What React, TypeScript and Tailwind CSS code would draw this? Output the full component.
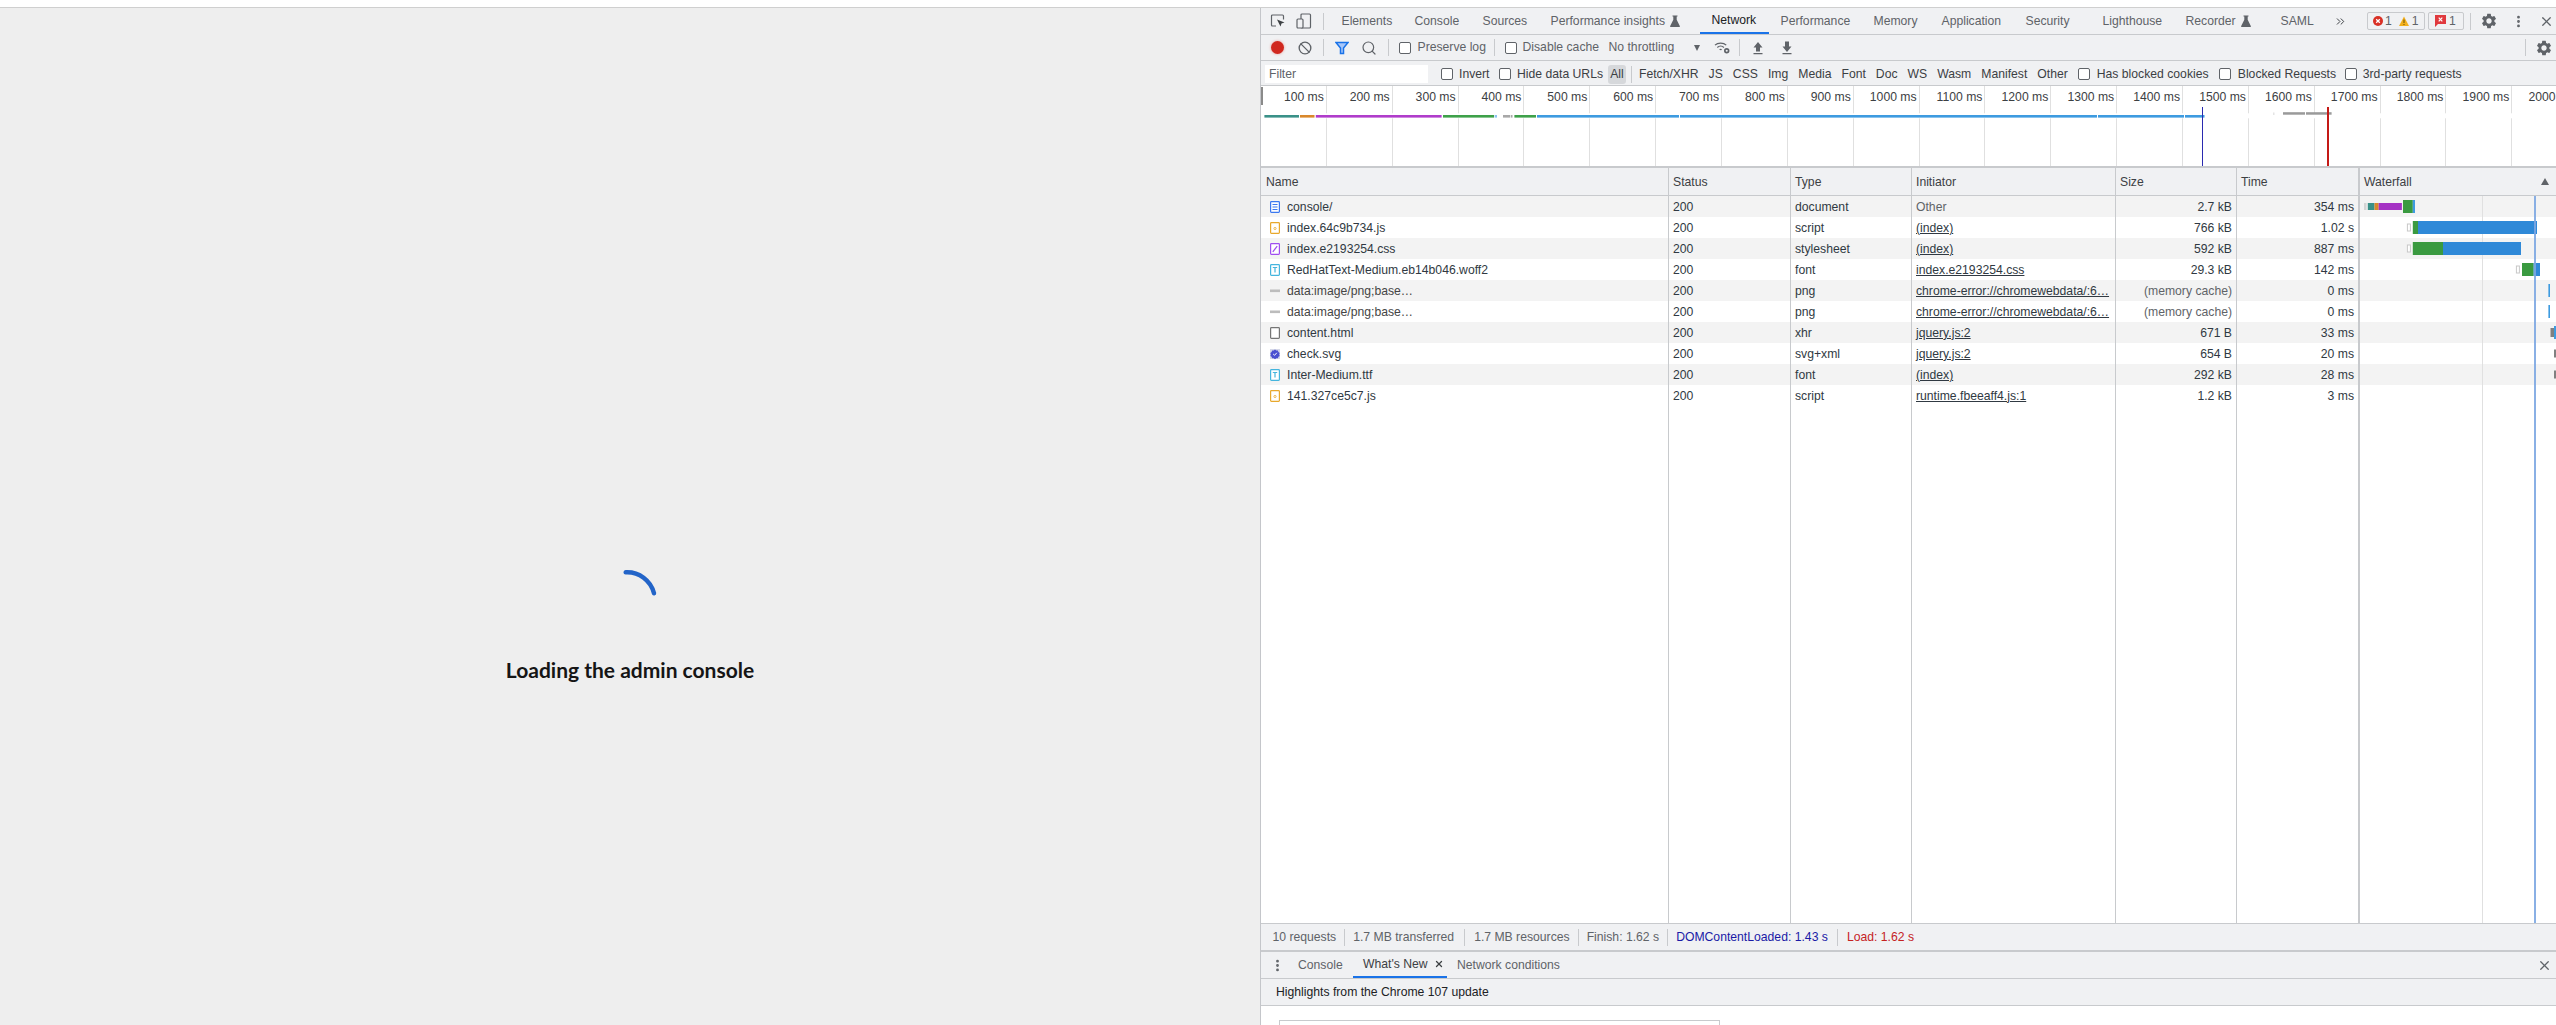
import React from "react";
import { Search, Ban, X, MoreVertical, ChevronsRight } from "lucide-react";
import { MdSettings } from "react-icons/md";

const tabs = [
  { label: "Elements", cls: "w-[73px]" },
  { label: "Console", cls: "w-[68px]" },
  { label: "Sources", cls: "w-[68px]" },
  { label: "Performance insights", cls: "w-[161px]", flask: true },
  { label: "Network", cls: "w-[69px] border-b-2 border-[#1a73e8] text-[#202124]" },
  { label: "Performance", cls: "w-[93px]" },
  { label: "Memory", cls: "w-[68px]" },
  { label: "Application", cls: "w-[84px]" },
  { label: "Security", cls: "w-[77px]" },
  { label: "Lighthouse", cls: "w-[83px]" },
  { label: "Recorder", cls: "w-[95px]", flask: true },
  { label: "SAML", cls: "w-[56px]" },
];

const filterTypes = [
  { label: "Fetch/XHR", cls: "ml-[7px]" },
  { label: "JS", cls: "ml-[10px]" },
  { label: "CSS", cls: "ml-[10px]" },
  { label: "Img", cls: "ml-[10px]" },
  { label: "Media", cls: "ml-[10px]" },
  { label: "Font", cls: "ml-[10px]" },
  { label: "Doc", cls: "ml-[10px]" },
  { label: "WS", cls: "ml-[10px]" },
  { label: "Wasm", cls: "ml-[10px]" },
  { label: "Manifest", cls: "ml-[10px]" },
  { label: "Other", cls: "ml-[10px]" },
];

const ticks = Array.from({ length: 20 }, (_, i) => `${(i + 1) * 100} ms`);

type FileKind = "doc" | "script" | "css" | "font" | "data" | "plain" | "svg";

const rows: { name: string; kind: FileKind; type: string; initiator: string; link: boolean; size: string; time: string }[] = [
  { name: "console/", kind: "doc", type: "document", initiator: "Other", link: false, size: "2.7 kB", time: "354 ms" },
  { name: "index.64c9b734.js", kind: "script", type: "script", initiator: "(index)", link: true, size: "766 kB", time: "1.02 s" },
  { name: "index.e2193254.css", kind: "css", type: "stylesheet", initiator: "(index)", link: true, size: "592 kB", time: "887 ms" },
  { name: "RedHatText-Medium.eb14b046.woff2", kind: "font", type: "font", initiator: "index.e2193254.css", link: true, size: "29.3 kB", time: "142 ms" },
  { name: "data:image/png;base…", kind: "data", type: "png", initiator: "chrome-error://chromewebdata/:6…", link: true, size: "(memory cache)", time: "0 ms" },
  { name: "data:image/png;base…", kind: "data", type: "png", initiator: "chrome-error://chromewebdata/:6…", link: true, size: "(memory cache)", time: "0 ms" },
  { name: "content.html", kind: "plain", type: "xhr", initiator: "jquery.js:2", link: true, size: "671 B", time: "33 ms" },
  { name: "check.svg", kind: "svg", type: "svg+xml", initiator: "jquery.js:2", link: true, size: "654 B", time: "20 ms" },
  { name: "Inter-Medium.ttf", kind: "font", type: "font", initiator: "(index)", link: true, size: "292 kB", time: "28 ms" },
  { name: "141.327ce5c7.js", kind: "script", type: "script", initiator: "runtime.fbeeaff4.js:1", link: true, size: "1.2 kB", time: "3 ms" },
];

// page coordinates, the svg viewBox lines up with them
const overviewBars = [
  [1264.4, 1299, "#3a9188"], [1300, 1314.5, "#d9882b"], [1315.8, 1441.6, "#b03ccb"], [1443, 1494, "#3ea14a"],
  [1494.6, 1497, "#8cc4ee"], [1503, 1510.3, "#a8a8a8"], [1511, 1512.5, "#a8a8a8"], [1514.4, 1536, "#3ea14a"],
  [1537, 1679, "#3d9be0"], [1680, 2097, "#3d9be0"], [2098, 2184, "#3d9be0"], [2185, 2204.5, "#3d9be0"],
] as const;

const waterfallBars: [number, number, number, number, string][] = [
  [2364, 2366.5, 0, 7, "#d4d4d4"], [2367.8, 2374.5, 0, 7, "#3a9188"], [2374.5, 2378.7, 0, 7, "#d9882b"], [2378.7, 2401.9, 0, 7, "#a532c4"],
  [2403, 2412.8, 0, 13, "#3a9a40"], [2412.8, 2415, 0, 13, "#3d9be0"],
  [2412.8, 2418, 1, 13, "#3a9a40"], [2418, 2537, 1, 13, "#2f89d8"],
  [2412.8, 2443, 2, 13, "#3a9a40"], [2443, 2521, 2, 13, "#2f89d8"],
  [2522, 2533.6, 3, 13, "#3a9a40"], [2533.6, 2540, 3, 13, "#2f89d8"],
  [2548.4, 2550, 4, 13, "#3d9be0"], [2548.4, 2550, 5, 13, "#3d9be0"],
  [2550.5, 2554, 6, 9, "#808080"], [2554, 2556, 6, 13, "#3d9be0"],
  [2554, 2556, 7, 8, "#808080"], [2554, 2556, 8, 8, "#808080"],
];

const queued: [number, number][] = [[2407.4, 1], [2407.4, 2], [2516.4, 3]];

function Flask({ className }: { className?: string }) {
  return (
    <svg viewBox="0 0 10 12" className={className} fill="#5f6368">
      <path d="M2.5 0.5h5v1h-.8v3.2L9.8 11a.6.6 0 0 1-.5.9H.7a.6.6 0 0 1-.5-.9L3.3 4.7V1.500h-.8z" />
    </svg>
  );
}

function Checkbox({ className }: { className?: string }) {
  return <input type="checkbox" readOnly className={`appearance-none w-3 h-3 shrink-0 rounded-[2px] border border-[#5f6368] bg-white ${className ?? ""}`} />;
}

function Sep({ className }: { className?: string }) {
  return <div className={`w-px h-[17px] shrink-0 bg-[#c8cacd] ${className ?? ""}`} />;
}

function FileIcon({ kind }: { kind: FileKind }) {
  if (kind === "data") {
    return (
      <svg width="10" height="12" viewBox="0 0 10 12" className="shrink-0">
        <rect x="0" y="4.500" width="10" height="2.600" fill="#bcbcbc" />
      </svg>
    );
  }
  if (kind === "svg") {
    return (
      <svg width="10" height="12" viewBox="0 0 10 12" className="shrink-0">
        <rect x="0" y="1" width="10" height="10" fill="#d5d8e8" />
        <path d="M5 1.500l1.300 1 1.600 0 .5 1.500 1.300 1-.5 1.500.5 1.500-1.300.8-.5 1.500-1.600 0-1.300 1-1.300-1-1.600 0-.5-1.500-1.300-.8.5-1.500-.5-1.500 1.300-1 .5-1.500 1.600 0z" fill="#4a50d0" />
        <path d="M3.200 6l1.300 1.300 2.300-2.500" stroke="#fff" strokeWidth="1" fill="none" />
      </svg>
    );
  }
  const color = { doc: "#3b78f0", script: "#e8a82c", css: "#a04ef0", font: "#45b5de", plain: "#757575" }[kind];
  return (
    <svg width="10" height="12" viewBox="0 0 10 12" className="shrink-0">
      <rect x="0.6" y="0.6" width="8.800" height="10.800" rx="0.800" fill="#fff" stroke={color} strokeWidth="1.200" />
      {kind === "doc" && <path d="M2.500 3.500h5M2.500 6h5M2.500 8.500h5" stroke={color} strokeWidth="1.100" />}
      {kind === "script" && <circle cx="5" cy="6.500" r="1.100" fill="none" stroke={color} strokeWidth="0.800" />}
      {kind === "css" && <path d="M2.800 8.800L7.200 3.200" stroke={color} strokeWidth="1.300" />}
      {kind === "font" && <path d="M2.800 3.500h4.400M5 3.500v5" stroke={color} strokeWidth="1.200" />}
    </svg>
  );
}

function Network() {
  return (
    <svg viewBox="0 0 18 16" className="w-[17px] h-[15px]" fill="none" stroke="#5f6368" strokeWidth="1.300">
      <path d="M1 5.500C4 2.500 10 2.500 13 5.500" />
      <path d="M3.500 8c2-2 5-2 7 0" />
      <path d="M6 10.500c.6-.6 1.400-.6 2 0" />
      <circle cx="13.500" cy="11.500" r="2" strokeWidth="1.800" />
    </svg>
  );
}

function Column({ header, width, children, className }: { header: React.ReactNode; width: string; children: React.ReactNode; className?: string }) {
  return (
    <div className={`flex flex-col shrink-0 h-full ${width} ${className ?? ""}`}>
      <div className="h-[28px] shrink-0 flex items-center bg-[#f0f1f3] border-b border-[#c8cacd] text-[#3c4043] pl-[4px] pt-[1px]">{header}</div>
      {children}
    </div>
  );
}

function Cell({ i, className, children }: { i: number; className?: string; children?: React.ReactNode }) {
  return (
    <div className={`h-[21px] shrink-0 flex items-center whitespace-nowrap overflow-hidden pt-[1px] ${i % 2 === 0 ? "bg-[#f3f3f3]" : "bg-white"} ${className ?? ""}`}>
      {children}
    </div>
  );
}

export default function App() {
  return (
    <div className="flex flex-col w-[2556px] h-screen overflow-hidden bg-white font-['Liberation_Sans',Arial,sans-serif] text-[12.2px] text-[#303942]">
      <div className="h-[8px] shrink-0 bg-white border-b border-[#cfcfcf]" />
      <div className="flex flex-1 min-h-0">
        {/* page being loaded */}
        <div className="w-[1260px] shrink-0 bg-[#eeeeee] flex flex-col items-center pt-[558px]">
          <svg width="66" height="60" viewBox="0 0 66 60" fill="none">
            <path d="M28.700 6.300A27.700 27.700 0 0 1 57 27.300" stroke="#2264c8" strokeWidth="4.500" strokeLinecap="round" />
          </svg>
          <div className="mt-[29px] text-[21px] leading-[30px] font-bold text-[#151515] font-['Lato',sans-serif]">Loading the admin console</div>
        </div>

        {/* devtools */}
        <div className="flex-1 min-w-0 flex flex-col border-l border-[#c4c6ca]">
          <div className="h-[27px] shrink-0 flex items-center bg-[#f0f1f3] border-b border-[#c8cacd] pl-[4px]">
            <div className="w-[26px] flex justify-center">
              <svg viewBox="0 0 16 16" className="w-[16px] h-[16px]" fill="none">
                <path d="M6 13H2.500a1 1 0 0 1-1-1V3a1 1 0 0 1 1-1h10a1 1 0 0 1 1 1v3.500" stroke="#5f6368" strokeWidth="1.200" />
                <path d="M7 6.500l7.500 3-3 1 -1 3z" fill="#3c4043" />
              </svg>
            </div>
            <div className="w-[26px] flex justify-center">
              <svg viewBox="0 0 16 16" className="w-[16px] h-[16px]" fill="none" stroke="#5f6368" strokeWidth="1.200">
                <rect x="5" y="1" width="9.500" height="14" rx="1" />
                <rect x="1" y="6" width="6" height="9" rx="1" fill="#f0f1f3" />
              </svg>
            </div>
            <Sep className="ml-[6px]" />
            <div className="flex items-center h-full ml-[6px] text-[#5f6368]">
              {tabs.map((t) => (
                <div key={t.label} className={`h-full flex items-center gap-[5px] pl-[11.500px] shrink-0 ${t.cls}`}>
                  <span className="whitespace-nowrap">{t.label}</span>
                  {t.flask && <Flask className="w-[10px] h-[12px]" />}
                </div>
              ))}
            </div>
            <ChevronsRight size={13} strokeWidth={1.800} className="shrink-0 text-[#3c4043] ml-[9px]" />
            <div className="ml-[20px] h-[18px] w-[58px] shrink-0 flex items-center rounded-[2px] border border-[#c8cacd] pl-[5px] text-[#5f6368]">
              <svg viewBox="0 0 10 10" className="w-[10px] h-[10px]">
                <circle cx="5" cy="5" r="5" fill="#d93025" />
                <path d="M3.200 3.200l3.600 3.600M6.800 3.200L3.200 6.800" stroke="#fff" strokeWidth="1.300" />
              </svg>
              <span className="ml-[2px]">1</span>
              <svg viewBox="0 0 10 10" className="w-[10px] h-[10px] ml-[7px]">
                <path d="M5 0.500L10 10H0z" fill="#f2b01e" />
                <path d="M5 3.500v3.500M5 8v1" stroke="#6b4e00" strokeWidth="1" />
              </svg>
              <span className="ml-[3px]">1</span>
            </div>
            <div className="ml-[3px] h-[18px] w-[36px] shrink-0 flex items-center rounded-[2px] border border-[#c8cacd] pl-[6px] text-[#5f6368]">
              <svg viewBox="0 0 11 12" className="w-[11px] h-[12px]">
                <path d="M0 0h11v9H3l-3 3z" fill="#e0393e" />
                <path d="M3.700 2.700l3.600 3.600M7.300 2.700L3.700 6.300" stroke="#fff" strokeWidth="1.200" />
              </svg>
              <span className="ml-[3px]">1</span>
            </div>
            <Sep className="ml-[6px]" />
            <MdSettings size={18} className="shrink-0 text-[#5f6368] ml-[9px]" />
            <MoreVertical size={15} strokeWidth={2.500} className="shrink-0 text-[#5f6368] ml-[13px]" />
            <X size={15} strokeWidth={2} className="shrink-0 text-[#5f6368] ml-[13px]" />
          </div>

          <div className="h-[26px] shrink-0 flex items-center bg-[#f0f1f3] border-b border-[#c8cacd] text-[#5f6368]">
            <div className="w-[32px] shrink-0 flex justify-center">
              <div className="w-[13px] h-[13px] rounded-full bg-[#d0281f] shadow-[0_0_3px_#e89a94]" />
            </div>
            <div className="w-[24px] shrink-0 flex justify-center">
              <Ban size={14} strokeWidth={2.300} />
            </div>
            <Sep className="ml-[6px]" />
            <div className="w-[24px] ml-[6px] shrink-0 flex justify-center">
              <svg viewBox="0 0 14 14" className="w-[14px] h-[14px]">
                <path d="M1 1.500h12L8.500 7v5.500h-3V7z" fill="#a8c7fa" stroke="#1a73e8" strokeWidth="1.500" />
              </svg>
            </div>
            <div className="w-[24px] ml-[3px] shrink-0 flex justify-center">
              <Search size={16} strokeWidth={1.800} />
            </div>
            <Sep className="ml-[7px]" />
            <Checkbox className="ml-[10px]" />
            <span className="ml-[6.500px] w-[76px] shrink-0">Preserve log</span>
            <Sep />
            <Checkbox className="ml-[10px]" />
            <span className="ml-[6px] w-[86px] shrink-0">Disable cache</span>
            <span className="w-[85px] shrink-0">No throttling</span>
            <span className="w-0 h-0 shrink-0 border-x-[3.500px] border-x-transparent border-t-[6px] border-t-[#5f6368]" />
            <div className="ml-[14px] shrink-0 flex"><Network /></div>
            <Sep className="ml-[8px]" />
            <svg viewBox="0 0 12 14" className="w-[12px] h-[14px] ml-[12px]" fill="#5f6368"><path d="M6 1L10.500 6.500H8v4H4v-4H1.500zM1.500 12h9v1.300h-9z" /></svg>
            <svg viewBox="0 0 12 14" className="w-[12px] h-[14px] ml-[17px]" fill="#5f6368"><path d="M4 0.500h4v5h2.500L6 11 1.500 5.500H4zM1.500 12h9v1.300h-9z" /></svg>
            <div className="flex-1" />
            <Sep />
            <MdSettings size={18} className="shrink-0 ml-[9px] mr-[3px]" />
          </div>

          <div className="h-[25px] shrink-0 flex items-center bg-[#f0f1f3] border-b border-[#c8cacd] text-[#3c4043] pt-[2px]">
            <div className="ml-[4px] w-[163px] h-[18px] shrink-0 bg-white flex items-center pl-[4px] text-[#5f6368]">Filter</div>
            <Checkbox className="ml-[13px]" />
            <span className="ml-[6px] w-[40px] shrink-0">Invert</span>
            <Checkbox />
            <span className="ml-[6px] w-[91px] shrink-0 whitespace-nowrap">Hide data URLs</span>
            <span className="w-[18px] h-[19px] shrink-0 flex items-center justify-center rounded-[3px] bg-[#d6d8db]">All</span>
            <Sep className="ml-[5px]" />
            {filterTypes.map((f) => (
              <span key={f.label} className={`shrink-0 ${f.cls}`}>{f.label}</span>
            ))}
            <Checkbox className="ml-[10px]" />
            <span className="ml-[7px] w-[122px] shrink-0 whitespace-nowrap">Has blocked cookies</span>
            <Checkbox />
            <span className="ml-[7px] w-[107px] shrink-0 whitespace-nowrap">Blocked Requests</span>
            <Checkbox />
            <span className="ml-[6px] shrink-0 whitespace-nowrap">3rd-party requests</span>
          </div>

          {/* overview timeline */}
          <div className="relative h-[82px] shrink-0 bg-white border-b-2 border-[#c8cacd] overflow-hidden">
            <div className="grid grid-cols-[repeat(20,65.860px)] h-full text-[#3c4043]">
              {ticks.map((t) => (
                <div key={t} className="border-r border-[#e0e0e0] text-right pr-[2px] pt-[3px] leading-[16px] whitespace-nowrap">{t}</div>
              ))}
            </div>
            <svg viewBox="1261 86 1295 80" className="absolute top-0 left-0 w-[1295px] h-[80px]">
              <rect x="1261" y="113.300" width="1295" height="5" fill="#fff" />
              <rect x="1261" y="87" width="2" height="18" fill="#8a8a8a" />
              {overviewBars.map(([a, b, c]) => (
                <rect key={a} x={a} y="115" width={b - a} height="2.600" fill={c} />
              ))}
              <rect x="2273" y="112.500" width="1.500" height="2.500" fill="#e4e4e4" />
              <rect x="2283" y="112.200" width="22" height="2.500" fill="#9a9a9a" />
              <rect x="2306" y="112.200" width="25.600" height="2.500" fill="#9a9a9a" />
              <rect x="2202" y="107" width="1" height="59" fill="#2a2ab0" />
              <rect x="2327" y="107" width="2" height="59" fill="#c41a16" />
            </svg>
          </div>

          {/* request table */}
          <div className="flex flex-1 min-h-0 bg-white">
            <Column header="Name" width="w-[408px]" className="border-r border-[#c8cacd] [&>div:first-child]:pl-[5px]">
              {rows.map((r, i) => (
                <Cell key={i} i={i} className="pl-[9px] gap-[7px]">
                  <FileIcon kind={r.kind} />
                  <span className={r.kind === "data" ? "text-[#454545]" : ""}>{r.name}</span>
                </Cell>
              ))}
            </Column>
            <Column header="Status" width="w-[122px]" className="border-r border-[#c8cacd]">
              {rows.map((r, i) => (
                <Cell key={i} i={i} className="pl-[4px]">200</Cell>
              ))}
            </Column>
            <Column header="Type" width="w-[121px]" className="border-r border-[#c8cacd]">
              {rows.map((r, i) => (
                <Cell key={i} i={i} className="pl-[4px]">{r.type}</Cell>
              ))}
            </Column>
            <Column header="Initiator" width="w-[204px]" className="border-r border-[#c8cacd]">
              {rows.map((r, i) => (
                <Cell key={i} i={i} className={`pl-[4px] ${r.link ? "underline" : "text-[#5f6368]"}`}>{r.initiator}</Cell>
              ))}
            </Column>
            <Column header="Size" width="w-[121px]" className="border-r border-[#c8cacd]">
              {rows.map((r, i) => (
                <Cell key={i} i={i} className={`justify-end pr-[4px] ${r.size.startsWith("(") ? "text-[#5f6368]" : ""}`}>{r.size}</Cell>
              ))}
            </Column>
            <Column header="Time" width="w-[123px]" className="border-r-2 border-[#c8cacd]">
              {rows.map((r, i) => (
                <Cell key={i} i={i} className="justify-end pr-[4px]">{r.time}</Cell>
              ))}
            </Column>
            <Column header={<div className="flex items-center justify-between w-full pr-[7px]"><span>Waterfall</span><span className="w-0 h-0 border-x-[4px] border-x-transparent border-b-[7px] border-b-[#5f6368]" /></div>} width="flex-1 min-w-0 relative">
              {rows.map((r, i) => (
                <Cell key={i} i={i} />
              ))}
              <svg viewBox="2360 196 196 727" className="absolute top-[28px] left-0 w-[196px] h-[727px]">
                <rect x="2482" y="196" width="1" height="727" fill="#e0e0e0" />
                {queued.map(([x, i]) => (
                  <rect key={i} x={x} y={196 + 21 * i + 7} width="3" height="7" fill="#fff" stroke="#c8c8c8" />
                ))}
                {waterfallBars.map(([a, b, i, h, c]) => (
                  <rect key={`${a}-${i}`} x={a} y={196 + 21 * i + 10.500 - h / 2} width={b - a} height={h} fill={c} />
                ))}
                <rect x="2534" y="196" width="2" height="727" fill="#7da7e2" fillOpacity="0.900" />
              </svg>
            </Column>
          </div>

          {/* status bar */}
          <div className="h-[29px] shrink-0 flex items-center bg-[#f0f1f3] border-t border-b-2 border-[#c8cacd] text-[#5f6368] pl-[11.500px]">
            <span>10 requests</span>
            <Sep className="mx-[8px]" />
            <span>1.7 MB transferred</span>
            <Sep className="mx-[9.500px]" />
            <span>1.7 MB resources</span>
            <Sep className="mx-[8px]" />
            <span>Finish: 1.62 s</span>
            <Sep className="mx-[8px]" />
            <span className="text-[#1a1aa6]">DOMContentLoaded: 1.43 s</span>
            <Sep className="mx-[9px]" />
            <span className="text-[#c5221f]">Load: 1.62 s</span>
          </div>

          {/* drawer */}
          <div className="h-[27px] shrink-0 flex items-center bg-[#f0f1f3] border-b border-[#c8cacd] text-[#5f6368]">
            <MoreVertical size={15} strokeWidth={2.500} className="shrink-0 ml-[9px]" />
            <span className="ml-[13px] w-[55px] shrink-0">Console</span>
            <div className="h-full w-[94px] shrink-0 flex items-center pl-[10px] border-b-2 border-[#1a73e8] text-[#3c4043]">
              <span>What's New</span>
              <X size={10} strokeWidth={3} className="ml-[6px]" />
            </div>
            <span className="ml-[10px]">Network conditions</span>
            <div className="flex-1" />
            <X size={15} strokeWidth={2} className="shrink-0 mr-[4px]" />
          </div>
          <div className="h-[27px] shrink-0 flex items-center bg-[#f0f1f3] border-b border-[#c8cacd] pl-[15px] text-[#202124]">Highlights from the Chrome 107 update</div>
          <div className="h-[19px] shrink-0 overflow-hidden bg-white pl-[18px] pt-[14px]">
            <div className="w-[441px] h-[40px] border border-[#c8cacd]" />
          </div>
        </div>
      </div>
    </div>
  );
}
